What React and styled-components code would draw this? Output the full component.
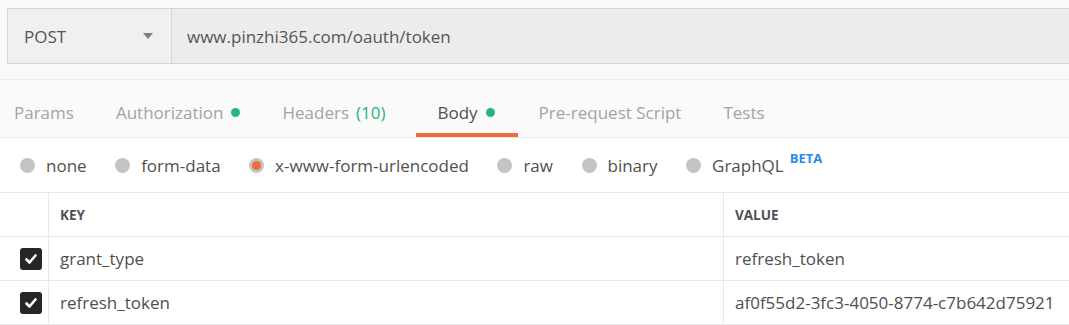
import React from "react";
import styled, { createGlobalStyle } from "styled-components";

const Global = createGlobalStyle`
  html, body { margin: 0; padding: 0; background: #ffffff; }
  body { font-family: "Open Sans", "Noto Sans", sans-serif; color: #505050; }
  * { box-sizing: border-box; }
`;

const Page = styled.div`
  width: 1069px;
  height: 325px;
  overflow: hidden;
  display: flex;
  flex-direction: column;
`;

const Top = styled.div`
  background: #fafafa;
  padding: 8px 0 15px 7px;
  border-bottom: 1px solid #ebebeb;
`;

const UrlBar = styled.div`
  display: flex;
  height: 56px;
  border: 1px solid #d6d6d6;
  border-right: none;
  border-radius: 2px 0 0 2px;
  background: #ececec;
`;

const Method = styled.div`
  width: 164px;
  display: flex;
  align-items: center;
  justify-content: space-between;
  padding: 0 18px 0 16px;
  background: #f0f0f0;
  border-right: 1px solid #d6d6d6;
  font-size: 17px;
  font-weight: 400;
  color: #555;
`;

const Url = styled.div`
  flex: 1;
  display: flex;
  align-items: center;
  padding-left: 15px;
  font-size: 17px;
  color: #555;
`;

const Tabs = styled.div`
  display: flex;
  height: 58px;
  background: #fafafa;
  border-bottom: 1px solid #e8e8e8;
`;

const Tab = styled.div`
  display: flex;
  align-items: center;
  padding: 11px 21px 0;
  padding-left: ${(p) => (p.$first ? "14px" : "21px")};
  padding-right: ${(p) => (p.$wide ? "31px" : p.$active ? "23px" : "21px")};
  font-size: 17px;
  color: ${(p) => (p.$active ? "#505050" : "#a3a3a3")};
  border-bottom: 4px solid ${(p) => (p.$active ? "#f26b3a" : "transparent")};
`;

const Dot = styled.span`
  width: 9px;
  height: 9px;
  border-radius: 50%;
  background: #26b47f;
  margin-left: 8px;
`;

const Count = styled.span`
  color: #26b47f;
  margin-left: 7px;
`;

const Radios = styled.div`
  display: flex;
  align-items: center;
  height: 55px;
  padding-left: 20px;
  gap: 28.5px;
  border-bottom: 1px solid #e8e8e8;
`;

const RadioItem = styled.div`
  display: flex;
  align-items: center;
  gap: 11px;
  font-size: 17px;
  color: #505050;
`;

const Circle = styled.span`
  width: 15px;
  height: 15px;
  border-radius: 50%;
  background: #c4c4c4;
  display: flex;
  align-items: center;
  justify-content: center;
  &::after {
    content: "";
    width: 9px;
    height: 9px;
    border-radius: 50%;
    background: ${(p) => (p.$checked ? "#f26b3a" : "transparent")};
  }
`;

const Label = styled.span`
  display: flex;
  align-items: flex-start;
`;

const Beta = styled.span`
  color: #2a8ae8;
  font-size: 13px;
  font-weight: 700;
  margin-left: 6px;
  margin-top: -2px;
  line-height: 1;
`;

const Table = styled.div`
  display: grid;
  grid-template-columns: 49px 675px 1fr;
`;

const Cell = styled.div`
  height: 44px;
  display: flex;
  align-items: center;
  padding-left: ${(p) => (p.$check ? "0" : "11px")};
  justify-content: ${(p) => (p.$check ? "flex-end" : "flex-start")};
  padding-right: ${(p) => (p.$check ? "6px" : "0")};
  border-bottom: 1px solid #e8e8e8;
  border-right: ${(p) => (p.$last ? "none" : "1px solid #e8e8e8")};
  font-size: ${(p) => (p.$head ? "13.5px" : "17px")};
  font-weight: ${(p) => (p.$head ? 700 : 400)};
  color: #505050;
  white-space: nowrap;
`;

const Check = styled.span`
  width: 22px;
  height: 22px;
  border-radius: 3px;
  background: #262626;
  display: flex;
  align-items: center;
  justify-content: center;
`;

const CheckBox = () => (
  <Check>
    <svg width="14" height="14" viewBox="0 0 14 14">
      <path d="M2.5 7.5 L5.5 10.5 L11.5 3.5" fill="none" stroke="#fff" strokeWidth="2.6" strokeLinecap="round" strokeLinejoin="round" />
    </svg>
  </Check>
);

const rows = [
  ["grant_type", "refresh_token"],
  ["refresh_token", "af0f55d2-3fc3-4050-8774-c7b642d75921"],
];

export default function App() {
  return (
    <Page>
      <Global />
      <Top>
        <UrlBar>
          <Method>
            POST
            <svg width="10" height="6" viewBox="0 0 10 6">
              <path d="M0 0 L10 0 L5 6 Z" fill="#808080" />
            </svg>
          </Method>
          <Url>www.pinzhi365.com/oauth/token</Url>
        </UrlBar>
      </Top>
      <Tabs>
        <Tab $first>Params</Tab>
        <Tab>
          Authorization<Dot />
        </Tab>
        <Tab $wide>
          Headers<Count>(10)</Count>
        </Tab>
        <Tab $active>
          Body<Dot />
        </Tab>
        <Tab>Pre-request Script</Tab>
        <Tab>Tests</Tab>
      </Tabs>
      <Radios>
        <RadioItem><Circle />none</RadioItem>
        <RadioItem><Circle />form-data</RadioItem>
        <RadioItem><Circle $checked />x-www-form-urlencoded</RadioItem>
        <RadioItem><Circle />raw</RadioItem>
        <RadioItem><Circle />binary</RadioItem>
        <RadioItem>
          <Circle />
          <Label>GraphQL<Beta>BETA</Beta></Label>
        </RadioItem>
      </Radios>
      <Table>
        <Cell $head $check />
        <Cell $head>KEY</Cell>
        <Cell $head $last>VALUE</Cell>
        {rows.map(([k, v]) => (
          <React.Fragment key={k}>
            <Cell $check><CheckBox /></Cell>
            <Cell>{k}</Cell>
            <Cell $last>{v}</Cell>
          </React.Fragment>
        ))}
      </Table>
    </Page>
  );
}
